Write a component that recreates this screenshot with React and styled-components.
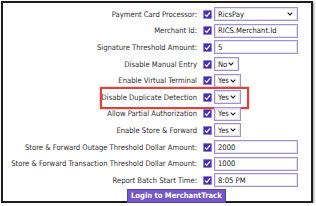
import React from "react";
import styled, { createGlobalStyle } from "styled-components";

const Global = createGlobalStyle`
  html, body { margin: 0; padding: 0; background: #fff; }
  body { font-family: "DejaVu Sans Condensed", "DejaVu Sans", sans-serif; }
`;

const Frame = styled.div`
  box-sizing: border-box;
  margin: 1px 0 0 1px;
  width: 312px;
  height: 202px;
  border: 2px solid #1e1e1e;
  box-shadow: 1px 1px 2px #9a9a9a;
  padding-top: 3px;
`;

const Row = styled.div`
  position: relative;
  display: grid;
  grid-template-columns: 197px 14px auto;
  align-items: center;
  height: 16.6px;
  ${(p) =>
    p.$highlight &&
    `
    &::after {
      content: "";
      position: absolute;
      left: 97px;
      top: -2px;
      width: 145px;
      height: 18px;
      border: 2px solid #e2403a;
      box-shadow: 0 0 2px rgba(200, 40, 40, 0.5);
      pointer-events: none;
    }
  `}
`;

const Label = styled.span`
  text-align: right;
  font-size: 7.6px;
  color: #2e2e2e;
  white-space: nowrap;
  padding-right: 3px;
`;

const Check = styled.span`
  box-sizing: border-box;
  width: 9px;
  height: 9px;
  margin-left: 3px;
  background: #4b2fb3;
  border: 1px solid #8f80d6;
  border-radius: 1px;
  display: flex;
  align-items: center;
  justify-content: center;
`;

const Field = styled.div`
  box-sizing: border-box;
  height: 14px;
  width: ${(p) => p.$w}px;
  border: 1px solid #9d92d6;
  box-shadow: inset 0 0 0 1px #e4e0f5;
  font-size: 7.6px;
  color: #222;
  display: flex;
  align-items: center;
  justify-content: space-between;
  padding: 0 4px 0 3px;
  white-space: nowrap;
`;

const Caret = styled.svg`
  width: 6px;
  height: 4px;
  flex: none;
`;

const ButtonRow = styled.div`
  display: flex;
  padding-left: 124px;
`;

const Button = styled.div`
  background: #7458c8;
  color: #fff;
  font-weight: bold;
  font-size: 7.6px;
  line-height: 10px;
  padding: 1px 3px;
  border: 1px solid #5a41ad;
  white-space: nowrap;
`;

const CheckBox = () => (
  <Check>
    <svg width="7" height="7" viewBox="0 0 7 7">
      <path d="M1 3.6 L2.8 5.4 L6 1.4" stroke="#fff" strokeWidth="1.3" fill="none" />
    </svg>
  </Check>
);

const Select = ({ value, w }) => (
  <Field $w={w}>
    <span>{value}</span>
    <Caret viewBox="0 0 6 4">
      <path d="M0.7 0.7 L3 3 L5.3 0.7" stroke="#222" strokeWidth="1.2" fill="none" />
    </Caret>
  </Field>
);

const rows = [
  { label: "Payment Card Processor:", type: "select", value: "RicsPay", w: 84 },
  { label: "Merchant Id:", type: "input", value: "RICS.Merchant.Id", w: 84 },
  { label: "Signature Threshold Amount:", type: "input", value: "5", w: 84 },
  { label: "Disable Manual Entry", type: "select", value: "No", w: 25 },
  { label: "Enable Virtual Terminal", type: "select", value: "Yes", w: 27 },
  { label: "Disable Duplicate Detection", type: "select", value: "Yes", w: 27, highlight: true },
  { label: "Allow Partial Authorization", type: "select", value: "Yes", w: 27 },
  { label: "Enable Store & Forward", type: "select", value: "Yes", w: 27 },
  { label: "Store & Forward Outage Threshold Dollar Amount:", type: "input", value: "2000", w: 84 },
  { label: "Store & Forward Transaction Threshold Dollar Amount:", type: "input", value: "1000", w: 84 },
  { label: "Report Batch Start Time:", type: "input", value: "8:05 PM", w: 84 },
];

export default function App() {
  return (
    <>
      <Global />
      <Frame>
        {rows.map((r) => (
          <Row key={r.label} $highlight={r.highlight}>
            <Label>{r.label}</Label>
            <CheckBox />
            {r.type === "select" ? (
              <Select value={r.value} w={r.w} />
            ) : (
              <Field $w={r.w}>
                <span>{r.value}</span>
              </Field>
            )}
          </Row>
        ))}
        <ButtonRow>
          <Button>Login to MerchantTrack</Button>
        </ButtonRow>
      </Frame>
    </>
  );
}
